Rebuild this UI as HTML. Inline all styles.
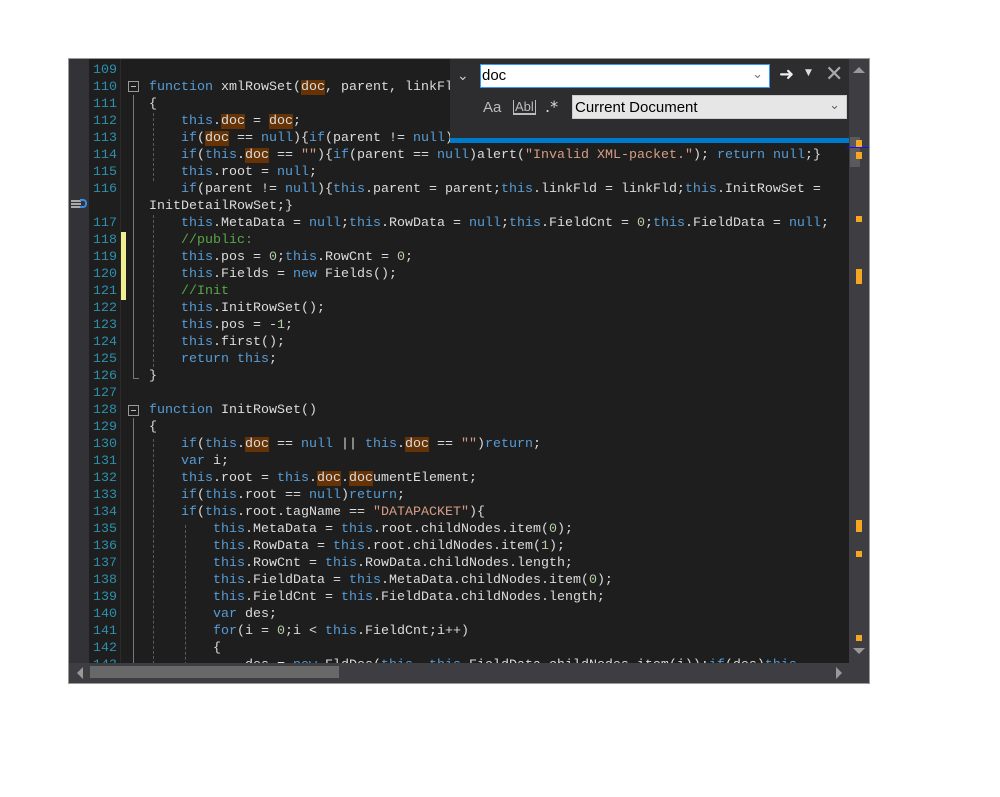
<!DOCTYPE html>
<html><head><meta charset="utf-8"><style>
body{margin:0;background:#fff;width:1000px;height:797px;position:relative;overflow:hidden;font-family:"Liberation Mono",monospace}
#ed{position:absolute;left:68px;top:58px;width:802px;height:626px;background:#1e1e1e;overflow:hidden;border:1px solid #9a9a9a;box-sizing:border-box}
#gl{position:absolute;left:0;top:0;width:20px;height:604px;background:#333337}
.ln{position:absolute;left:20px;width:28px;text-align:right;color:#2b91af;font-size:13.33px;line-height:17px}
.l{position:absolute;left:80px;color:#dcdcdc;font-size:13.33px;line-height:17px;white-space:pre}
.k{color:#569cd6}.s{color:#d69d85}.n{color:#b5cea8}.c{color:#57a64a}.h{background:#653306}
.g{position:absolute;width:0;border-left:1px dashed #5a5a5a}
.fold{position:absolute;left:59px;width:11px;height:11px;border:1px solid #999;box-sizing:border-box;background:#1e1e1e}
.fold:after{content:"";position:absolute;left:2px;top:4px;width:5px;height:1px;background:#bbb}
.mk{position:absolute;left:787px;width:6px;background:#f5a623}
</style></head><body>
<div id="ed">
<div id="gl"></div>
<div style="position:absolute;left:51px;top:0;width:1px;height:604px;background:#2b2b2b"></div>
<div style="position:absolute;left:52px;top:173px;width:5px;height:68px;background:#efef91"></div>
<div style="position:absolute;left:64px;top:36px;width:1px;height:283px;background:#777"></div>
<div style="position:absolute;left:64px;top:319px;width:6px;height:1px;background:#777"></div>
<div style="position:absolute;left:64px;top:359px;width:1px;height:260px;background:#777"></div>
<div class="fold" style="top:22px"></div>
<div class="fold" style="top:346px"></div>
<div class="g" style="left:84px;top:54px;height:68px"></div>
<div class="g" style="left:84px;top:156px;height:152px"></div>
<div class="g" style="left:84px;top:380px;height:230px"></div>
<div class="g" style="left:116px;top:466px;height:150px"></div>
<div style="position:absolute;left:2px;top:141px;width:10px;height:2px;background:#aaa;box-shadow:0 3px 0 #aaa,0 6px 0 #aaa"></div>
<div style="position:absolute;left:11px;top:140px;width:5px;height:5px;border:2px solid #3a8ee6;border-left:none;border-radius:0 4px 4px 0"></div>

<div class="ln" style="top:3px">109</div><div class="ln" style="top:20px">110</div><div class="ln" style="top:37px">111</div><div class="ln" style="top:54px">112</div><div class="ln" style="top:71px">113</div><div class="ln" style="top:88px">114</div><div class="ln" style="top:105px">115</div><div class="ln" style="top:122px">116</div><div class="ln" style="top:156px">117</div><div class="ln" style="top:173px">118</div><div class="ln" style="top:190px">119</div><div class="ln" style="top:207px">120</div><div class="ln" style="top:224px">121</div><div class="ln" style="top:241px">122</div><div class="ln" style="top:258px">123</div><div class="ln" style="top:275px">124</div><div class="ln" style="top:292px">125</div><div class="ln" style="top:309px">126</div><div class="ln" style="top:326px">127</div><div class="ln" style="top:343px">128</div><div class="ln" style="top:360px">129</div><div class="ln" style="top:377px">130</div><div class="ln" style="top:394px">131</div><div class="ln" style="top:411px">132</div><div class="ln" style="top:428px">133</div><div class="ln" style="top:445px">134</div><div class="ln" style="top:462px">135</div><div class="ln" style="top:479px">136</div><div class="ln" style="top:496px">137</div><div class="ln" style="top:513px">138</div><div class="ln" style="top:530px">139</div><div class="ln" style="top:547px">140</div><div class="ln" style="top:564px">141</div><div class="ln" style="top:581px">142</div><div class="ln" style="top:598px">143</div>

<div class="l" style="top:20px"><span class="k">function</span> xmlRowSet(<span class="h">doc</span>, parent, linkFld)</div>
<div class="l" style="top:37px">{</div>
<div class="l" style="top:54px">    <span class="k">this</span>.<span class="h">doc</span> = <span class="h">doc</span>;</div>
<div class="l" style="top:71px">    <span class="k">if</span>(<span class="h">doc</span> == <span class="k">null</span>){<span class="k">if</span>(parent != <span class="k">null</span>)</div>
<div class="l" style="top:88px">    <span class="k">if</span>(<span class="k">this</span>.<span class="h">doc</span> == <span class="s">""</span>){<span class="k">if</span>(parent == <span class="k">null</span>)alert(<span class="s">"Invalid XML-packet."</span>); <span class="k">return</span> <span class="k">null</span>;}</div>
<div class="l" style="top:105px">    <span class="k">this</span>.root = <span class="k">null</span>;</div>
<div class="l" style="top:122px">    <span class="k">if</span>(parent != <span class="k">null</span>){<span class="k">this</span>.parent = parent;<span class="k">this</span>.linkFld = linkFld;<span class="k">this</span>.InitRowSet =</div>
<div class="l" style="top:139px">InitDetailRowSet;}</div>
<div class="l" style="top:156px">    <span class="k">this</span>.MetaData = <span class="k">null</span>;<span class="k">this</span>.RowData = <span class="k">null</span>;<span class="k">this</span>.FieldCnt = <span class="n">0</span>;<span class="k">this</span>.FieldData = <span class="k">null</span>;</div>
<div class="l" style="top:173px">    <span class="c">//public:</span></div>
<div class="l" style="top:190px">    <span class="k">this</span>.pos = <span class="n">0</span>;<span class="k">this</span>.RowCnt = <span class="n">0</span>;</div>
<div class="l" style="top:207px">    <span class="k">this</span>.Fields = <span class="k">new</span> Fields();</div>
<div class="l" style="top:224px">    <span class="c">//Init</span></div>
<div class="l" style="top:241px">    <span class="k">this</span>.InitRowSet();</div>
<div class="l" style="top:258px">    <span class="k">this</span>.pos = -<span class="n">1</span>;</div>
<div class="l" style="top:275px">    <span class="k">this</span>.first();</div>
<div class="l" style="top:292px">    <span class="k">return</span> <span class="k">this</span>;</div>
<div class="l" style="top:309px">}</div>
<div class="l" style="top:343px"><span class="k">function</span> InitRowSet()</div>
<div class="l" style="top:360px">{</div>
<div class="l" style="top:377px">    <span class="k">if</span>(<span class="k">this</span>.<span class="h">doc</span> == <span class="k">null</span> || <span class="k">this</span>.<span class="h">doc</span> == <span class="s">""</span>)<span class="k">return</span>;</div>
<div class="l" style="top:394px">    <span class="k">var</span> i;</div>
<div class="l" style="top:411px">    <span class="k">this</span>.root = <span class="k">this</span>.<span class="h">doc</span>.<span class="h">doc</span>umentElement;</div>
<div class="l" style="top:428px">    <span class="k">if</span>(<span class="k">this</span>.root == <span class="k">null</span>)<span class="k">return</span>;</div>
<div class="l" style="top:445px">    <span class="k">if</span>(<span class="k">this</span>.root.tagName == <span class="s">"DATAPACKET"</span>){</div>
<div class="l" style="top:462px">        <span class="k">this</span>.MetaData = <span class="k">this</span>.root.childNodes.item(<span class="n">0</span>);</div>
<div class="l" style="top:479px">        <span class="k">this</span>.RowData = <span class="k">this</span>.root.childNodes.item(<span class="n">1</span>);</div>
<div class="l" style="top:496px">        <span class="k">this</span>.RowCnt = <span class="k">this</span>.RowData.childNodes.length;</div>
<div class="l" style="top:513px">        <span class="k">this</span>.FieldData = <span class="k">this</span>.MetaData.childNodes.item(<span class="n">0</span>);</div>
<div class="l" style="top:530px">        <span class="k">this</span>.FieldCnt = <span class="k">this</span>.FieldData.childNodes.length;</div>
<div class="l" style="top:547px">        <span class="k">var</span> des;</div>
<div class="l" style="top:564px">        <span class="k">for</span>(i = <span class="n">0</span>;i &lt; <span class="k">this</span>.FieldCnt;i++)</div>
<div class="l" style="top:581px">        {</div>
<div class="l" style="top:598px">            des = <span class="k">new</span> FldDes(<span class="k">this</span>, <span class="k">this</span>.FieldData.childNodes.item(i));<span class="k">if</span>(des)<span class="k">this</span></div>

<div style="position:absolute;left:381px;top:0;width:399px;height:79px;background:#2d2d30"></div>
<div style="position:absolute;left:381px;top:79px;width:399px;height:5px;background:#007acc"></div>
<div style="position:absolute;left:388px;top:8px;color:#ccc;font:14px 'Liberation Sans',sans-serif">&#8964;</div>
<div style="position:absolute;left:411px;top:5px;width:290px;height:24px;background:#fff;border:1px solid #3399ff;box-sizing:border-box;font:15px 'Liberation Sans',sans-serif;color:#000;padding:2px 0 0 1px">doc<span style="position:absolute;right:6px;top:1px;color:#777;font-size:13px">&#8964;</span></div>
<div style="position:absolute;left:710px;top:5px;color:#eee;font:18px 'DejaVu Sans',sans-serif">&#10140;</div>
<div style="position:absolute;left:736px;top:9px;color:#ddd;font:9px 'DejaVu Sans',sans-serif">&#9660;</div>
<div style="position:absolute;left:756px;top:3px;color:#aaa;font:22px 'DejaVu Sans',sans-serif">&#10005;</div>
<div style="position:absolute;left:414px;top:40px;color:#bbb;font:15px 'Liberation Sans',sans-serif">Aa</div>
<div style="position:absolute;left:444px;top:41px;color:#bbb;font:13px 'Liberation Sans',sans-serif;border-bottom:2px solid #bbb;border-left:1px solid #bbb;border-right:1px solid #bbb;padding:0 1px;line-height:13px">Abl</div>
<div style="position:absolute;left:476px;top:38px;color:#ddd;font:16px 'DejaVu Sans',sans-serif">.*</div>
<div style="position:absolute;left:503px;top:36px;width:275px;height:24px;background:#e6e6e6;border:1px solid #ccc;box-sizing:border-box;font:15px 'Liberation Sans',sans-serif;color:#000;padding:3px 0 0 2px">Current Document<span style="position:absolute;right:6px;top:1px;color:#666;font-size:13px">&#8964;</span></div>

<div style="position:absolute;left:780px;top:0;width:20px;height:604px;background:#3e3e42"></div>
<div style="position:absolute;left:784px;top:8px;width:0;height:0;border-left:6px solid transparent;border-right:6px solid transparent;border-bottom:6px solid #999"></div>
<div style="position:absolute;left:784px;top:589px;width:0;height:0;border-left:6px solid transparent;border-right:6px solid transparent;border-top:6px solid #999"></div>
<div style="position:absolute;left:781px;top:78px;width:10px;height:30px;background:#5a5a5e"></div>
<div style="position:absolute;left:778px;top:88px;width:24px;height:1px;background:#1010ff"></div>
<div class="mk" style="top:81px;height:7px"></div>
<div class="mk" style="top:93px;height:7px"></div>
<div class="mk" style="top:157px;height:6px"></div>
<div class="mk" style="top:210px;height:15px"></div>
<div class="mk" style="top:461px;height:12px"></div>
<div class="mk" style="top:492px;height:6px"></div>
<div class="mk" style="top:576px;height:6px"></div>
<div style="position:absolute;left:0;top:604px;width:800px;height:20px;background:#3e3e42"></div>
<div style="position:absolute;left:8px;top:608px;width:0;height:0;border-top:6px solid transparent;border-bottom:6px solid transparent;border-right:6px solid #999"></div>
<div style="position:absolute;left:767px;top:608px;width:0;height:0;border-top:6px solid transparent;border-bottom:6px solid transparent;border-left:6px solid #999"></div>
<div style="position:absolute;left:21px;top:607px;width:249px;height:12px;background:#686868"></div>
</div>
</body></html>
